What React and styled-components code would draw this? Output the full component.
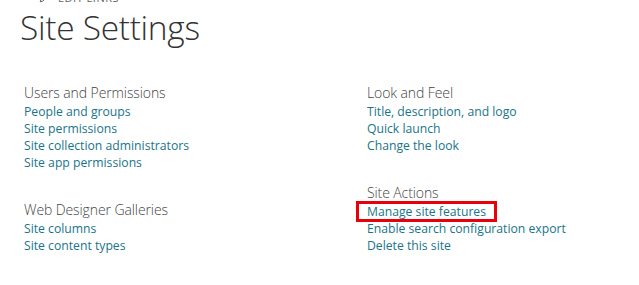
import React from 'react';
import styled, { createGlobalStyle } from 'styled-components';

const GlobalStyle = createGlobalStyle`
  html, body {
    margin: 0;
    padding: 0;
    background: #fff;
  }
  body {
    font-family: "Open Sans", "Liberation Sans", sans-serif;
    overflow: hidden;
  }
`;

const Page = styled.div`
  width: 639px;
  height: 285px;
  padding: 0 0 0 20px;
  box-sizing: border-box;
`;

const EditLinks = styled.div`
  display: flex;
  align-items: center;
  gap: 9px;
  height: 12px;
  line-height: 12px;
  margin-top: -8px;
  padding-left: 19px;
  color: #666;
  font-size: 11px;
  letter-spacing: 0.5px;
  overflow: hidden;
  svg { width: 10px; height: 10px; }
`;

const Title = styled.h1`
  margin: 0;
  font-family: "Open Sans", sans-serif;
  font-weight: 300;
  font-size: 33.5px;
  line-height: 46px;
  color: #333;
  letter-spacing: -0.3px;
`;

const Columns = styled.div`
  display: grid;
  grid-template-columns: 343px 1fr;
  margin-top: 32px;
  padding-left: 4px;
`;

const Column = styled.div`
  display: flex;
  flex-direction: column;
`;

const Section = styled.div`
  display: flex;
  flex-direction: column;
  margin-bottom: ${p => p.$gap}px;
`;

const Heading = styled.div`
  font-weight: 300;
  font-size: 14px;
  line-height: 21px;
  color: #444;
  letter-spacing: -0.1px;
`;

const Link = styled.a`
  position: relative;
  align-self: flex-start;
  font-size: 12.2px;
  line-height: 17px;
  color: #1a7488;
  text-decoration: none;
  cursor: pointer;

  ${p => p.$marked && `
    &::after {
      content: "";
      position: absolute;
      left: -11px;
      right: -11px;
      top: -2px;
      bottom: -2px;
      border: 3px solid #e8000b;
      pointer-events: none;
    }
  `}
`;

const PencilIcon = () => (
  <svg viewBox="0 0 16 16" fill="none" stroke="#555" strokeWidth="1.5">
    <path d="M2 14l1-4 8-8 3 3-8 8-4 1z" />
  </svg>
);

const left = [
  { title: 'Users and Permissions', gap: 28, links: ['People and groups', 'Site permissions', 'Site collection administrators', 'Site app permissions'] },
  { title: 'Web Designer Galleries', gap: 0, links: ['Site columns', 'Site content types'] },
];

const right = [
  { title: 'Look and Feel', gap: 28, links: ['Title, description, and logo', 'Quick launch', 'Change the look'] },
  { title: 'Site Actions', gap: 0, links: ['Manage site features', 'Enable search configuration export', 'Delete this site'] },
];

const renderColumn = sections => sections.map(s => (
  <Section key={s.title} $gap={s.gap}>
    <Heading>{s.title}</Heading>
    {s.links.map(l => (
      <Link key={l} $marked={l === 'Manage site features'}>{l}</Link>
    ))}
  </Section>
));

const App = () => (
  <>
    <GlobalStyle />
    <Page>
      <EditLinks>
        <PencilIcon />
        <span>EDIT LINKS</span>
      </EditLinks>
      <Title>Site Settings</Title>
      <Columns>
        <Column>{renderColumn(left)}</Column>
        <Column>{renderColumn(right)}</Column>
      </Columns>
    </Page>
  </>
);

export default App;
